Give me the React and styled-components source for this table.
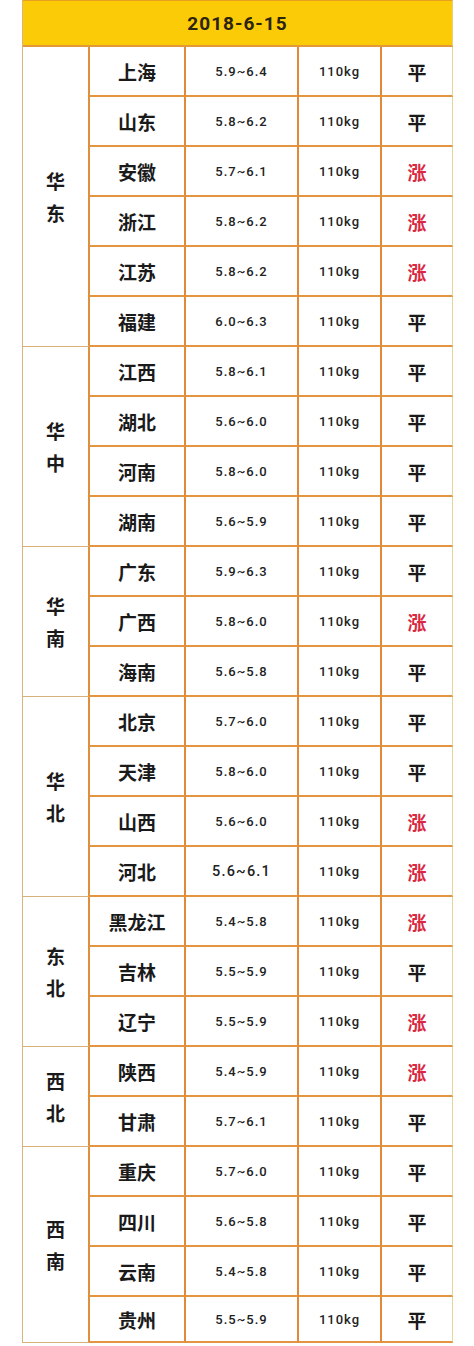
import React from "react";
import styled, { createGlobalStyle } from "styled-components";

const Global = createGlobalStyle`
  html, body { margin: 0; padding: 0; background: #fff; }
  body { font-family: Roboto, "Noto Sans CJK SC", sans-serif; color: #1e1e1e; }
`;

const Page = styled.div`
  padding: 0 22px 0 22px;
  width: 430px;
`;

const Table = styled.div`
  display: grid;
  grid-template-columns: 67px 96px 113px 83px 71px;
  border-left: 1px solid #d8b57e;
`;

const Header = styled.div`
  grid-column: 1 / -1;
  height: 44px;
  background: #fccb08;
  border-top: 1px solid #e8a020;
  border-right: 1px solid #e6cf80;
  border-bottom: 2px solid #e39a36;
  display: flex;
  align-items: center;
  justify-content: center;
  font-family: Roboto, sans-serif;
  font-weight: 700;
  font-size: 19px;
  letter-spacing: 1px;
  color: #2a2410;
`;

const Region = styled.div`
  grid-row: span ${(p) => p.$span};
  border-bottom: 1px solid #d6b27a;
  border-right: 2px solid #e0903c;
  display: flex;
  flex-direction: column;
  align-items: center;
  justify-content: center;
  font-family: "Noto Sans CJK SC", sans-serif;
  font-weight: 700;
  font-size: 19px;
  line-height: 32px;
  color: #1a1a1a;
`;

const Cell = styled.div`
  height: ${(p) => (p.$last ? 44 : 48)}px;
  border-bottom: 2px solid #e3953f;
  border-right: ${(p) => (p.$edge ? "1px solid #e6d49c" : "2px solid #e0893a")};
  display: flex;
  align-items: center;
  justify-content: center;
`;

const Province = styled(Cell)`
  font-family: "Noto Sans CJK SC", sans-serif;
  font-weight: 700;
  font-size: 19px;
  color: #1a1a1a;
`;

const Num = styled(Cell)`
  font-family: Roboto, sans-serif;
  font-weight: 500;
  font-size: ${(p) => (p.$big ? 14.5 : 13)}px;
  letter-spacing: ${(p) => (p.$big ? 1.2 : 1)}px;
  color: #222;
`;

const Trend = styled(Cell)`
  font-family: "Noto Sans CJK SC", sans-serif;
  font-weight: 700;
  font-size: 19px;
  color: ${(p) => (p.$up ? "#d9283f" : "#1a1a1a")};
`;

const data = [
  ["华东", [
    ["上海", "5.9~6.4", "平"],
    ["山东", "5.8~6.2", "平"],
    ["安徽", "5.7~6.1", "涨"],
    ["浙江", "5.8~6.2", "涨"],
    ["江苏", "5.8~6.2", "涨"],
    ["福建", "6.0~6.3", "平"],
  ]],
  ["华中", [
    ["江西", "5.8~6.1", "平"],
    ["湖北", "5.6~6.0", "平"],
    ["河南", "5.8~6.0", "平"],
    ["湖南", "5.6~5.9", "平"],
  ]],
  ["华南", [
    ["广东", "5.9~6.3", "平"],
    ["广西", "5.8~6.0", "涨"],
    ["海南", "5.6~5.8", "平"],
  ]],
  ["华北", [
    ["北京", "5.7~6.0", "平"],
    ["天津", "5.8~6.0", "平"],
    ["山西", "5.6~6.0", "涨"],
    ["河北", "5.6~6.1", "涨", true],
  ]],
  ["东北", [
    ["黑龙江", "5.4~5.8", "涨"],
    ["吉林", "5.5~5.9", "平"],
    ["辽宁", "5.5~5.9", "涨"],
  ]],
  ["西北", [
    ["陕西", "5.4~5.9", "涨"],
    ["甘肃", "5.7~6.1", "平"],
  ]],
  ["西南", [
    ["重庆", "5.7~6.0", "平"],
    ["四川", "5.6~5.8", "平"],
    ["云南", "5.4~5.8", "平"],
    ["贵州", "5.5~5.9", "平"],
  ]],
];

export default function App() {
  return (
    <Page>
      <Global />
      <Table>
        <Header>2018-6-15</Header>
        {data.map(([region, rows], gi) => (
          <React.Fragment key={region}>
            {rows.map(([prov, price, trend, big], i) => {
              const last = gi === data.length - 1 && i === rows.length - 1;
              return (
                <React.Fragment key={prov}>
                  {i === 0 && (
                    <Region $span={rows.length}>
                      {region.split("").map((c) => (
                        <span key={c}>{c}</span>
                      ))}
                    </Region>
                  )}
                  <Province $last={last}>{prov}</Province>
                  <Num $last={last} $big={big}>{price}</Num>
                  <Num $last={last}>110kg</Num>
                  <Trend $last={last} $edge $up={trend === "涨"}>{trend}</Trend>
                </React.Fragment>
              );
            })}
          </React.Fragment>
        ))}
      </Table>
    </Page>
  );
}
